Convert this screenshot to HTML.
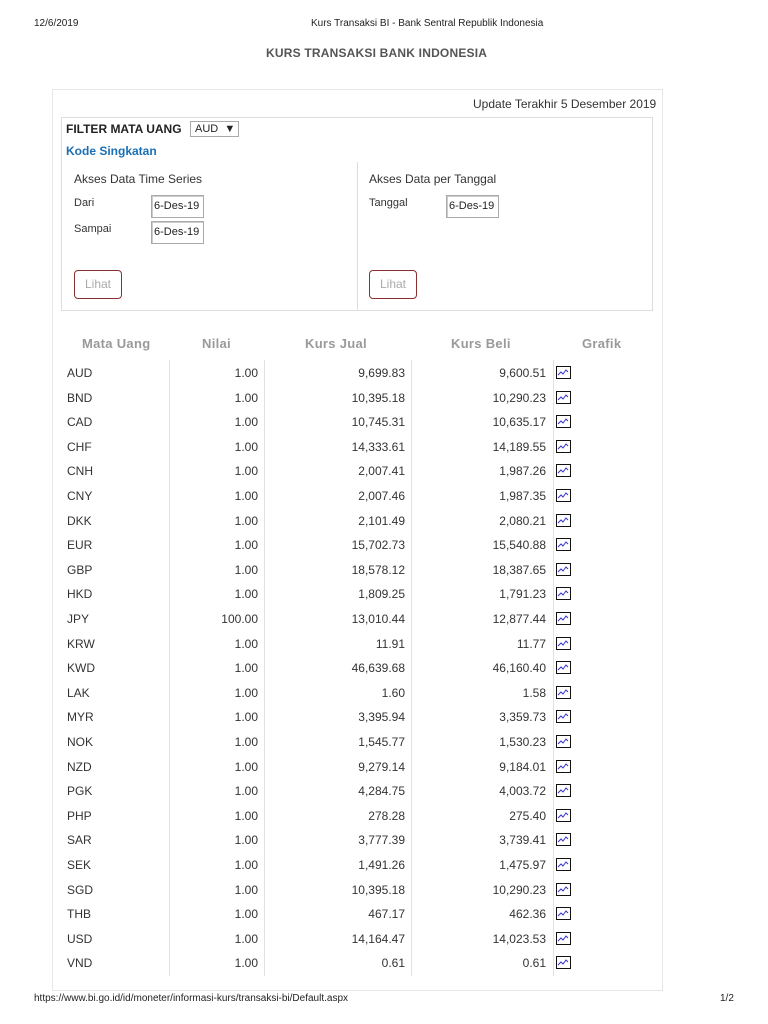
<!DOCTYPE html>
<html><head><meta charset="utf-8"><style>
*{margin:0;padding:0;box-sizing:border-box}
body{width:768px;height:1024px;background:#fff;position:relative;font-family:"Liberation Sans",sans-serif;color:#222;overflow:hidden}
.a{position:absolute;white-space:nowrap}
.box{position:absolute;border:1px solid #ddd}
.inp{position:absolute;border:1px solid #aaa;font-size:11px;padding:4px 2px;height:23px;width:53px;background:#fff;box-shadow:inset 1px 1px 0 #ccc}
.btn{position:absolute;border:1px solid #8b3030;border-radius:4px;width:48px;height:29px;color:#aaa;font-size:12px;text-align:center;line-height:27px}
.hd{position:absolute;top:336px;color:#999;font-size:13px;font-weight:bold;letter-spacing:.3px}
.r{position:absolute;left:0;width:768px;height:20px;font-size:12px;color:#333;line-height:20px}
.r span{position:absolute}
.ic{position:absolute;left:556px;top:3px;width:15px;height:13px;border:1.5px solid #111}
.vl{position:absolute;top:360px;height:616px;border-left:1px solid #e2e2e2}
</style></head><body>
<div class="a" style="left:34px;top:18px;font-size:10px">12/6/2019</div>
<div class="a" style="left:311px;top:18px;font-size:10px">Kurs Transaksi BI - Bank Sentral Republik Indonesia</div>
<div class="a" style="left:266px;top:46px;font-size:12px;font-weight:bold;color:#555;letter-spacing:.2px">KURS TRANSAKSI BANK INDONESIA</div>
<div class="box" style="left:52px;top:89px;width:611px;height:902px;border-color:#e6e6e6"></div>
<div class="a" style="left:473px;top:97px;font-size:12px;color:#333">Update Terakhir 5 Desember 2019</div>
<div class="box" style="left:61px;top:117px;width:592px;height:194px"></div>
<div class="a" style="left:66px;top:122px;font-size:12px;font-weight:bold;color:#222">FILTER MATA UANG</div>
<div class="a" style="left:190px;top:121px;width:49px;height:16px;border:1px solid #aaa;font-size:11px;padding:1px 4px">AUD &nbsp;▼</div>
<div class="a" style="left:66px;top:144px;font-size:12px;font-weight:bold;color:#1a6fb5">Kode Singkatan</div>
<div class="a" style="left:357px;top:162px;height:148px;border-left:1px solid #ddd"></div>
<div class="a" style="left:74px;top:172px;font-size:12px;color:#333">Akses Data Time Series</div>
<div class="a" style="left:74px;top:197px;font-size:11px;color:#333">Dari</div>
<div class="inp" style="left:151px;top:195px">6-Des-19</div>
<div class="a" style="left:74px;top:223px;font-size:11px;color:#333">Sampai</div>
<div class="inp" style="left:151px;top:221px">6-Des-19</div>
<div class="btn" style="left:74px;top:270px">Lihat</div>
<div class="a" style="left:369px;top:172px;font-size:12px;color:#333">Akses Data per Tanggal</div>
<div class="a" style="left:369px;top:197px;font-size:11px;color:#333">Tanggal</div>
<div class="inp" style="left:446px;top:195px">6-Des-19</div>
<div class="btn" style="left:369px;top:270px">Lihat</div>
<div class="hd" style="left:82px">Mata Uang</div>
<div class="hd" style="left:202px">Nilai</div>
<div class="hd" style="left:305px">Kurs Jual</div>
<div class="hd" style="left:451px">Kurs Beli</div>
<div class="hd" style="left:582px">Grafik</div>
<div class="vl" style="left:169px"></div><div class="vl" style="left:264px"></div><div class="vl" style="left:411px"></div><div class="vl" style="left:553px"></div>
<div id="rows"></div>
<div class="a" style="left:34px;top:993px;font-size:10px">https://www.bi.go.id/id/moneter/informasi-kurs/transaksi-bi/Default.aspx</div>
<div class="a" style="left:720px;top:993px;font-size:10px">1/2</div>
<script>
var d=[["AUD","1.00","9,699.83","9,600.51"],["BND","1.00","10,395.18","10,290.23"],["CAD","1.00","10,745.31","10,635.17"],["CHF","1.00","14,333.61","14,189.55"],["CNH","1.00","2,007.41","1,987.26"],["CNY","1.00","2,007.46","1,987.35"],["DKK","1.00","2,101.49","2,080.21"],["EUR","1.00","15,702.73","15,540.88"],["GBP","1.00","18,578.12","18,387.65"],["HKD","1.00","1,809.25","1,791.23"],["JPY","100.00","13,010.44","12,877.44"],["KRW","1.00","11.91","11.77"],["KWD","1.00","46,639.68","46,160.40"],["LAK","1.00","1.60","1.58"],["MYR","1.00","3,395.94","3,359.73"],["NOK","1.00","1,545.77","1,530.23"],["NZD","1.00","9,279.14","9,184.01"],["PGK","1.00","4,284.75","4,003.72"],["PHP","1.00","278.28","275.40"],["SAR","1.00","3,777.39","3,739.41"],["SEK","1.00","1,491.26","1,475.97"],["SGD","1.00","10,395.18","10,290.23"],["THB","1.00","467.17","462.36"],["USD","1.00","14,164.47","14,023.53"],["VND","1.00","0.61","0.61"]];
var h="";d.forEach(function(r,i){var t=363+24.6*i;h+='<div class="r" style="top:'+t+'px"><span style="left:67px">'+r[0]+'</span><span style="right:510px">'+r[1]+'</span><span style="right:363px">'+r[2]+'</span><span style="right:222px">'+r[3]+'</span><div class="ic"><svg width="12" height="10" style="position:absolute;left:0;top:0"><polyline points="1,8 4,5 6,7 9,3 11,5" fill="none" stroke="#33c" stroke-width="1"/></svg></div></div>';});
document.getElementById("rows").innerHTML=h;
</script>
</body></html>
